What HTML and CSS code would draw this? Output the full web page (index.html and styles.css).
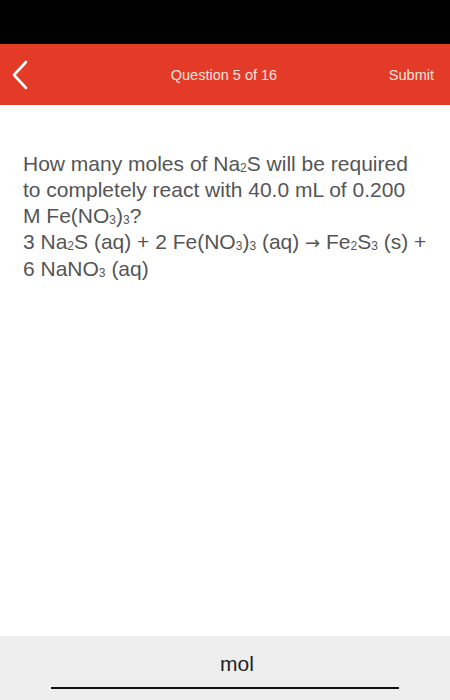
FILE: index.html
```html
<!DOCTYPE html>
<html lang="en">
<head>
  <meta charset="UTF-8">
  <meta name="viewport" content="width=device-width, initial-scale=1.0">
  <link rel="stylesheet" href="styles.css">
</head>
<body>
<div class="container">
  <div class="status-bar"></div>
  <div class="navbar">
    <div class="back">
      <svg width="18" height="30" viewBox="0 0 18 30"><path d="M15 2 L3 15 L15 28" fill="none" stroke="#fff" stroke-width="2.6" stroke-linecap="round" stroke-linejoin="round"/></svg>
    </div>
    <div class="title">Question 5 of 16</div>
    <div class="submit">Submit</div>
  </div>
  <div class="main">
    <p class="question">How many moles of Na<sub>2</sub>S will be required to completely react with 40.0 mL of 0.200 <span class="nowrap">M Fe(NO<sub>3</sub>)<sub>3</sub>?</span><br>3 Na<sub>2</sub>S (aq) + 2 Fe(NO<sub>3</sub>)<sub>3</sub> (aq) <span class="arrow">&rarr;</span> Fe<sub>2</sub>S<sub>3</sub> (s) + 6 NaNO<sub>3</sub> (aq)</p>
  </div>
  <div class="answer">
    <div class="unit">mol</div>
    <div class="answer-line"></div>
  </div>
</div>
</body>
</html>
```

FILE: styles.css
```css
body {
  margin: 0;
  overflow: hidden;
  font-family: "Liberation Sans", Arial, sans-serif;
}

.container {
  height: 100vh;
  width: 100vw;
  display: flex;
  flex-direction: column;
  background-color: #fff;
}

.status-bar {
  height: 44px;
  background-color: #000;
}

.navbar {
  height: 61px;
  background-color: #e43a28;
  display: grid;
  grid-template-columns: 1fr auto 1fr;
  align-items: center;
  padding: 0 16px 0 11px;
}

.back {
  width: 18px;
  height: 30px;
  margin-top: 1px;
}

.title {
  color: #fbe3df;
  font-size: 14.5px;
  padding-left: 3px;
}

.submit {
  justify-self: end;
  color: #fbe3df;
  font-size: 14.5px;
}

.main {
  flex: 1;
  padding: 46px 23px 0 23px;
}

.question {
  margin: 0;
  font-size: 21px;
  line-height: 26px;
  color: #555;
  width: 406px;
}

.nowrap {
  white-space: nowrap;
}

.question sub {
  font-size: 12px;
  vertical-align: -1px;
  line-height: 0;
}

.arrow {
  font-family: "DejaVu Sans", sans-serif;
  font-size: 18px;
}

.answer {
  height: 64px;
  background-color: #eeeeee;
  display: flex;
  flex-direction: column;
  align-items: center;
}

.unit {
  font-size: 21px;
  color: #222;
  margin-top: 16px;
  padding-left: 24px;
}

.answer-line {
  width: 348px;
  height: 2px;
  background-color: #111;
  margin-top: 11px;
}
```
